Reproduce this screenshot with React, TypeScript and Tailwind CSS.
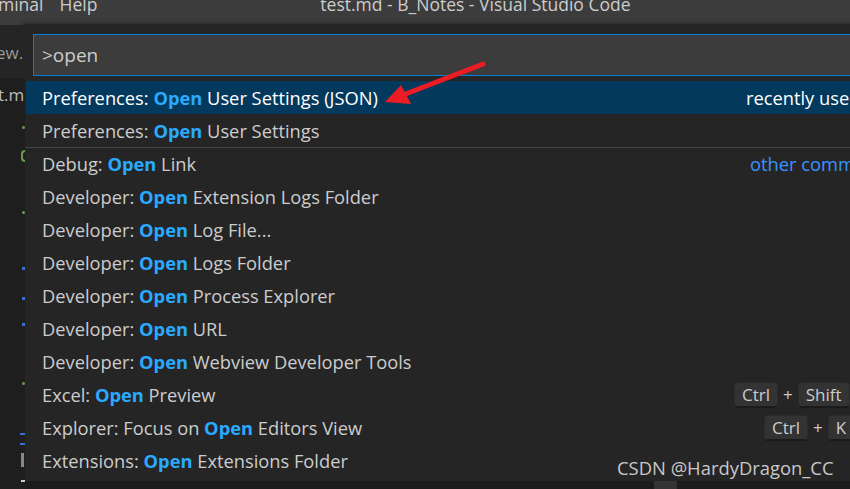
import React from "react";

type Row = { pre: string; post: string; right?: React.ReactNode; lw?: string; selected?: boolean };

const Key = ({ k }: { k: string }) => (
  <span className="inline-flex h-[26px] items-center rounded-[3px] border border-[#2a2a2a] border-b-[#1a1a1a] bg-[#333334] px-[7px] text-[17px] text-[#cccccc] shadow-[inset_0_-1px_0_#1c1c1c]">
    {k}
  </span>
);

const Plus = () => <span className="mx-[5px] text-[17px] text-[#cccccc]">+</span>;

const rows: Row[] = [
  { pre: "Debug: ", post: " Link", lw: "w-[708px]", right: <span className="text-[#3794ff]">other commands</span> },
  { pre: "Developer: ", post: " Extension Logs Folder" },
  { pre: "Developer: ", post: " Log File..." },
  { pre: "Developer: ", post: " Logs Folder" },
  { pre: "Developer: ", post: " Process Explorer" },
  { pre: "Developer: ", post: " URL" },
  { pre: "Developer: ", post: " Webview Developer Tools" },
  {
    pre: "Excel: ",
    post: " Preview",
    lw: "w-[692px]",
    right: (
      <span className="flex items-center">
        <Key k="Ctrl" />
        <Plus />
        <Key k="Shift" />
        <Plus />
        <Key k="V" />
      </span>
    ),
  },
  {
    pre: "Explorer: Focus on ",
    post: " Editors View",
    lw: "w-[722px]",
    right: (
      <span className="flex items-center">
        <Key k="Ctrl" />
        <Plus />
        <Key k="K" />
        <span className="ml-[5px]" />
        <Key k="E" />
      </span>
    ),
  },
  { pre: "Extensions: ", post: " Extensions Folder" },
];

function Item({ r, first }: { r: Row; first?: boolean }) {
  return (
    <div
      className={
        "flex h-[33px] shrink-0 items-center pl-[16px] " +
        (r.selected ? "bg-[#04395e] text-white " : "text-[#cccccc] ") +
        (first ? "border-t border-[#454545] " : "")
      }
    >
      <span className={"shrink-0 whitespace-nowrap " + (r.lw ?? "")}>
        {r.pre}
        <span className="font-bold text-[#2aaaff]">Open</span>
        {r.post}
      </span>
      {r.right && <span className="shrink-0 whitespace-nowrap">{r.right}</span>}
    </div>
  );
}

export default function App() {
  return (
    <div className="relative h-[489px] w-[850px] overflow-hidden bg-[#1e1e1e] font-['Open_Sans','Noto_Sans',sans-serif] text-[18.3px]">
      {/* title bar */}
      <div className="flex h-[25px] items-start overflow-hidden bg-[#3c3c3c] text-[#cccccc] shadow-[0_1px_2px_#111]">
        <div className="-mt-[9px] flex w-full whitespace-nowrap text-[17.5px]">
          <span className="-ml-[2px]">minal</span>
          <span className="ml-[16px]">Help</span>
          <span className="ml-[223px]">test.md - B_Notes - Visual Studio Code</span>
        </div>
      </div>

      <div className="flex h-[464px]">
        {/* background editor strip */}
        <div className="relative flex w-[25px] shrink-0 flex-col text-[17px] text-[#bbbbbb]">
          <div className="flex h-[53px] shrink-0 items-center bg-[#252526] pt-[2px]">
            <span className="-ml-[4px] whitespace-nowrap text-[#999999]">ew.</span>
          </div>
          <div className="flex flex-1 flex-col bg-[#1e1e1e]">
            <span className="-ml-[2px] mt-[4px] whitespace-nowrap text-[#bbbbbb]">t.m</span>
            <span className="absolute left-[22px] top-[101px] h-[3px] w-[3px] rounded-full bg-[#6a9955]" />
            <span className="absolute left-[21px] top-[125px] h-[12px] w-[4px] rounded-l-full border-2 border-r-0 border-[#6a9955]" />
            <span className="absolute left-[22px] top-[186px] h-[3px] w-[3px] rounded-full bg-[#6a9955]" />
            <span className="absolute left-[22px] top-[242px] h-[3px] w-[3px] bg-[#3a6fd0]" />
            <span className="absolute left-[22px] top-[272px] h-[3px] w-[3px] bg-[#3a6fd0]" />
            <span className="absolute left-[22px] top-[298px] h-[3px] w-[3px] bg-[#3a6fd0]" />
            <span className="absolute left-[22px] top-[357px] h-[3px] w-[3px] rounded-full bg-[#6a9955]" />
            <span className="absolute left-[20px] top-[408px] h-[12px] w-[5px] border-y-2 border-[#3a6fd0]" />
            <span className="absolute left-[21px] top-[428px] h-[14px] w-[3px] bg-[#888888]" />
            <span className="absolute left-[21px] top-[455px] h-[2px] w-[4px] bg-[#cccccc]" />
          </div>
        </div>

        {/* quick pick */}
        <div className="flex w-[880px] shrink-0 flex-col">
          <div className="flex h-[456px] shrink-0 flex-col bg-[#252526] shadow-[-2px_0_4px_#0c0c0c]">
            <div className="px-[8px] pt-[9px]">
              <div className="flex h-[42px] items-center border border-[#007fd4] bg-[#3c3c3c] pl-[8px] text-[19px] text-[#cccccc]">
                &gt;open
              </div>
            </div>
            <div className="mt-[5px] flex flex-col pl-[1px]">
              <Item
                r={{
                  pre: "Preferences: ",
                  post: " User Settings (JSON)",
                  selected: true,
                  lw: "w-[704px]",
                  right: <span>recently used</span>,
                }}
              />
              <Item r={{ pre: "Preferences: ", post: " User Settings" }} />
              {rows.map((r, i) => (
                <Item key={i} r={r} first={i === 0} />
              ))}
            </div>
          </div>
          <div className="flex flex-1 bg-[#1b1b1b]">
            <span className="ml-[629px] h-full w-[23px] bg-[#333333]" />
          </div>
        </div>
      </div>

      {/* watermark */}
      <div className="pointer-events-none absolute left-[617px] top-[454px] whitespace-nowrap text-[18.4px] text-[#c8c8c8]">
        CSDN @HardyDragon_CC
      </div>

      {/* red annotation arrow */}
      <svg className="pointer-events-none absolute left-0 top-0" width="850" height="489">
        <line x1="483" y1="64" x2="403" y2="95" stroke="#ed1c24" strokeWidth="5" strokeLinecap="round" />
        <polygon points="385,102 401,85 411,104" fill="#ed1c24" />
      </svg>
    </div>
  );
}
